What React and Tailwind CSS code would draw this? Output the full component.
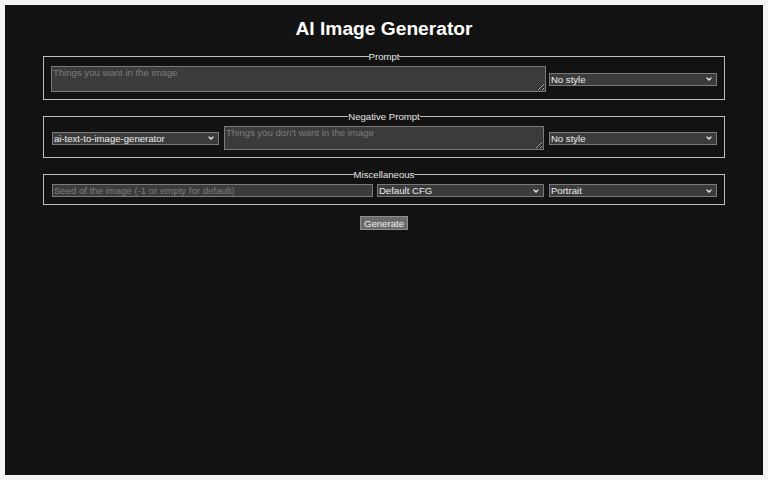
const ctl =
  "bg-[#3b3b3b] text-[#ececec] border border-[#7a7a7a] text-[9.6px] leading-[11px] [color-scheme:dark] outline-none placeholder:text-[#7c7c7c]";

const Fieldset = ({ legend, children }) => (
  <fieldset className="w-[90%] mx-auto border border-[#bdbdbd] px-[7px] pt-[4px] pb-[7px]">
    <legend className="mx-auto px-0 text-[9.6px] leading-[11px] text-[#e6e6e6]">{legend}</legend>
    <div className="flex items-center">{children}</div>
  </fieldset>
);

const StyleSelect = ({ className = "", value, options }) => (
  <span className={`relative flex ${className}`}>
    <select className={`${ctl} h-[13px] w-full appearance-none pl-[1px] pr-[10px]`} defaultValue={value}>
      {options.map((o) => (
        <option key={o}>{o}</option>
      ))}
    </select>
    <svg
      className="absolute right-[5px] top-1/2 -translate-y-1/2 pointer-events-none"
      width="6"
      height="4"
      viewBox="0 0 6 4"
    >
      <path d="M0.6 0.6 L3 3 L5.4 0.6" fill="none" stroke="#f0f0f0" strokeWidth="1.3" />
    </svg>
  </span>
);

const styles = ["No style", "Anime", "Photographic", "Digital art"];

export default function App() {
  return (
    <div
      className="h-[480px] bg-[#f4f4f4] p-[5px]"
      style={{ fontFamily: '"Liberation Sans", Arial, sans-serif' }}
    >
      <div className="h-full bg-[#121212] flex flex-col">
        <h1 className="mt-[13px] mb-[11px] text-center text-[19.2px] leading-[22px] font-bold text-white">
          AI Image Generator
        </h1>

        <div className="flex flex-col gap-[11px]">
          <Fieldset legend="Prompt">
            <textarea
              className={`${ctl} w-[495px] h-[26px] px-[1px] resize-y`}
              placeholder="Things you want in the image"
            />
            <StyleSelect className="ml-[3px] w-[168px]" value="No style" options={styles} />
          </Fieldset>

          <Fieldset legend="Negative Prompt">
            <StyleSelect
              className="ml-[1px] w-[167px]"
              value="ai-text-to-image-generator"
              options={["ai-text-to-image-generator", "stable-diffusion"]}
            />
            <textarea
              className={`${ctl} ml-[5px] w-[320px] h-[24px] px-[1px] resize-y`}
              placeholder="Things you don't want in the image"
            />
            <StyleSelect className="ml-[5px] w-[168px]" value="No style" options={styles} />
          </Fieldset>

          <Fieldset legend="Miscellaneous">
            <input
              className={`${ctl} ml-[1px] w-[321px] h-[13px] px-[1px]`}
              placeholder="Seed of the image (-1 or empty for default)"
            />
            <StyleSelect
              className="ml-[4px] w-[167px]"
              value="Default CFG"
              options={["Default CFG", "CFG 5", "CFG 7", "CFG 10"]}
            />
            <StyleSelect
              className="ml-[5px] w-[168px]"
              value="Portrait"
              options={["Portrait", "Landscape", "Square"]}
            />
          </Fieldset>
        </div>

        <div className="mt-[11px] flex justify-center">
          <button className="h-[14px] px-[3px] bg-[#6b6b6b] border border-[#8f8f8f] text-[9.6px] leading-[11px] text-[#f0f0f0]">
            Generate
          </button>
        </div>
      </div>
    </div>
  );
}
